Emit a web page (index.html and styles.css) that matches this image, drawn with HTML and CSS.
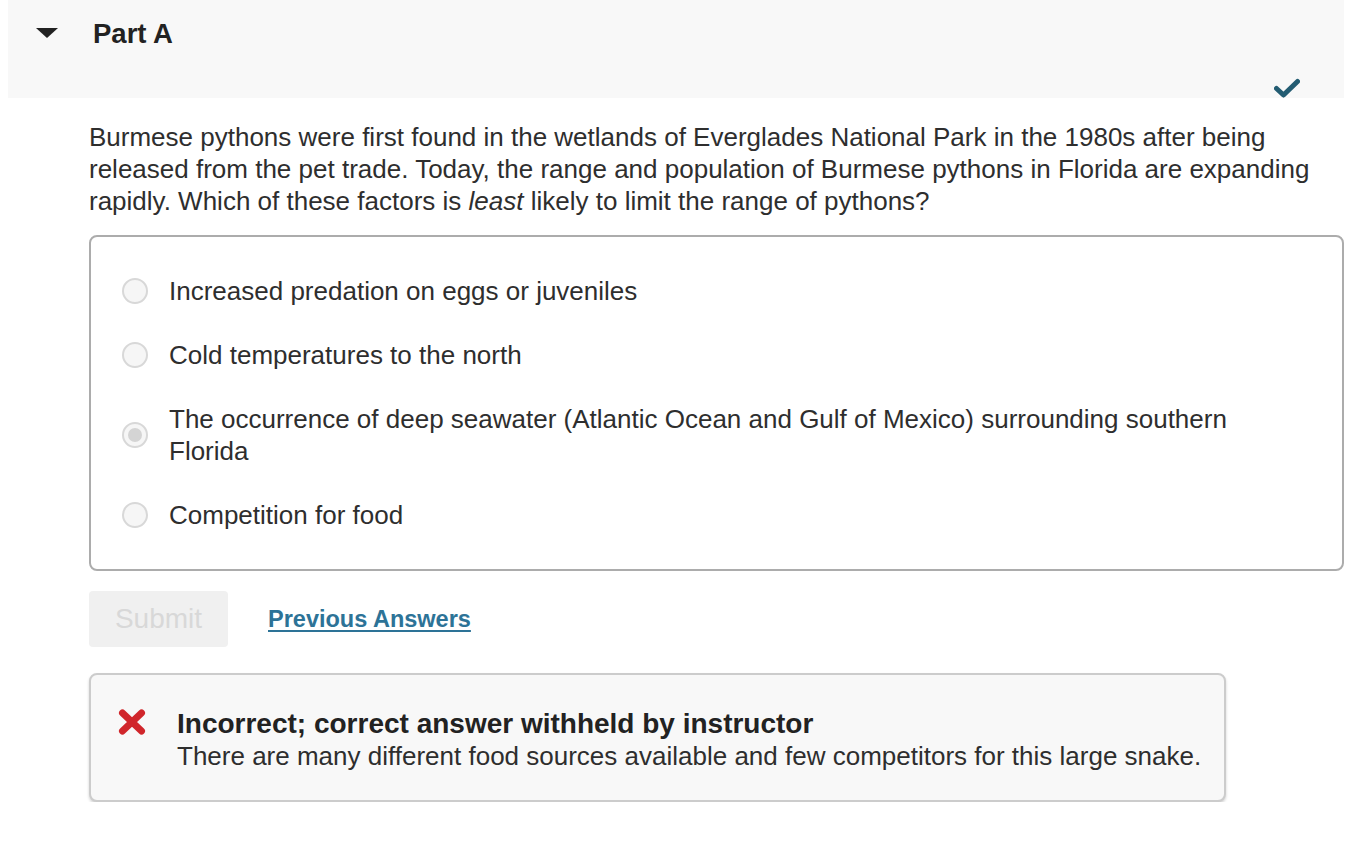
FILE: index.html
```html
<!DOCTYPE html>
<html>
<head>
<meta charset="utf-8">
<link rel="stylesheet" href="styles.css">
</head>
<body>
<div class="part-header">
  <div class="part-title-row">
    <span class="caret"></span>
    <h2 class="part-title">Part A</h2>
  </div>
  <div class="check-row">
    <svg class="check" width="26" height="20" viewBox="0 0 26 20"><path d="M2.5 10.5 L9.5 17 L23.5 3.5" fill="none" stroke="#235c72" stroke-width="5" stroke-linecap="round" stroke-linejoin="round"/></svg>
  </div>
</div>
<div class="content">
  <p class="question">Burmese pythons were first found in the wetlands of Everglades National Park in the 1980s after being released from the pet trade. Today, the range and population of Burmese pythons in Florida are expanding rapidly. Which of these factors is <em>least</em> likely to limit the range of pythons?</p>
  <div class="options">
    <div class="option"><span class="radio"></span><span class="opt-text">Increased predation on eggs or juveniles</span></div>
    <div class="option"><span class="radio"></span><span class="opt-text">Cold temperatures to the north</span></div>
    <div class="option"><span class="radio checked"></span><span class="opt-text">The occurrence of deep seawater (Atlantic Ocean and Gulf of Mexico) surrounding southern Florida</span></div>
    <div class="option"><span class="radio"></span><span class="opt-text">Competition for food</span></div>
  </div>
  <div class="actions">
    <button class="submit" disabled>Submit</button>
    <a class="prev-link" href="#">Previous Answers</a>
  </div>
  <div class="feedback">
    <svg class="x-icon" width="28" height="26" viewBox="0 0 28 26"><path d="M4.5 4 L23.5 22 M23.5 4 L4.5 22" stroke="#d0262b" stroke-width="7" stroke-linecap="round"/></svg>
    <div class="fb-text">
      <div class="fb-title">Incorrect; correct answer withheld by instructor</div>
      <div class="fb-body">There are many different food sources available and few competitors for this large snake.</div>
    </div>
  </div>
</div>
</body>
</html>
```
FILE: styles.css
```css
* { box-sizing: border-box; }
body {
  margin: 0;
  font-family: "Liberation Sans", Arial, sans-serif;
  color: #2e2e2e;
  background: #fff;
}
.part-header {
  margin: 0 20px 0 8px;
  background: #f8f8f8;
  height: 98px;
  display: flex;
  flex-direction: column;
}
.part-title-row {
  display: flex;
  align-items: center;
  padding: 17px 0 0 28px;
  height: 50px;
}
.caret {
  width: 0; height: 0;
  border-left: 11px solid transparent;
  border-right: 11px solid transparent;
  border-top: 10px solid #222;
  margin-top: -1px;
}
.part-title {
  margin: 0 0 0 35px;
  font-size: 27.5px;
  font-weight: bold;
  color: #222;
  line-height: 32px;
}
.check-row {
  display: flex;
  justify-content: flex-end;
  padding: 28px 44px 0 0;
}
.content {
  padding: 0 20px 0 89px;
}
.question {
  margin: 23px 0 0 0;
  font-size: 26px;
  line-height: 32px;
}
.options {
  margin-top: 18px;
  border: 2px solid #acacac;
  border-radius: 8px;
  padding: 38px 80px 38px 31px;
  display: flex;
  flex-direction: column;
  gap: 32px;
}
.option {
  display: flex;
  align-items: center;
  font-size: 26px;
  line-height: 32px;
}
.radio {
  flex: none;
  width: 26px; height: 26px;
  border-radius: 50%;
  border: 2px solid #d8d8d8;
  background: #f6f6f6;
  margin-right: 21px;
  display: flex;
  align-items: center;
  justify-content: center;
}
.radio.checked::after {
  content: "";
  width: 14px; height: 14px;
  border-radius: 50%;
  background: #d4d4d4;
}
.actions {
  display: flex;
  align-items: center;
  margin-top: 20px;
  gap: 40px;
}
.submit {
  width: 139px;
  height: 56px;
  border: none;
  border-radius: 4px;
  background: #f0f0f0;
  color: #d8d8d8;
  font-family: "Liberation Sans", Arial, sans-serif;
  font-size: 28px;
  padding: 0;
}
.prev-link {
  color: #2d7397;
  font-weight: bold;
  font-size: 23.5px;
  text-decoration: underline;
  text-underline-offset: 3px;
}
.feedback {
  margin-top: 26px;
  width: 1137px;
  background: #f8f8f8;
  border: 2px solid #cccccc;
  border-radius: 8px;
  box-shadow: 0 2px 3px rgba(0,0,0,0.18);
  padding: 32px 20px 28px 27px;
  display: flex;
  align-items: flex-start;
}
.x-icon { flex: none; margin-top: 2px; margin-right: 31px; }
.fb-title {
  font-weight: bold;
  font-size: 28px;
  line-height: 33px;
  color: #222;
}
.fb-body {
  font-size: 26px;
  line-height: 32px;
}
```
